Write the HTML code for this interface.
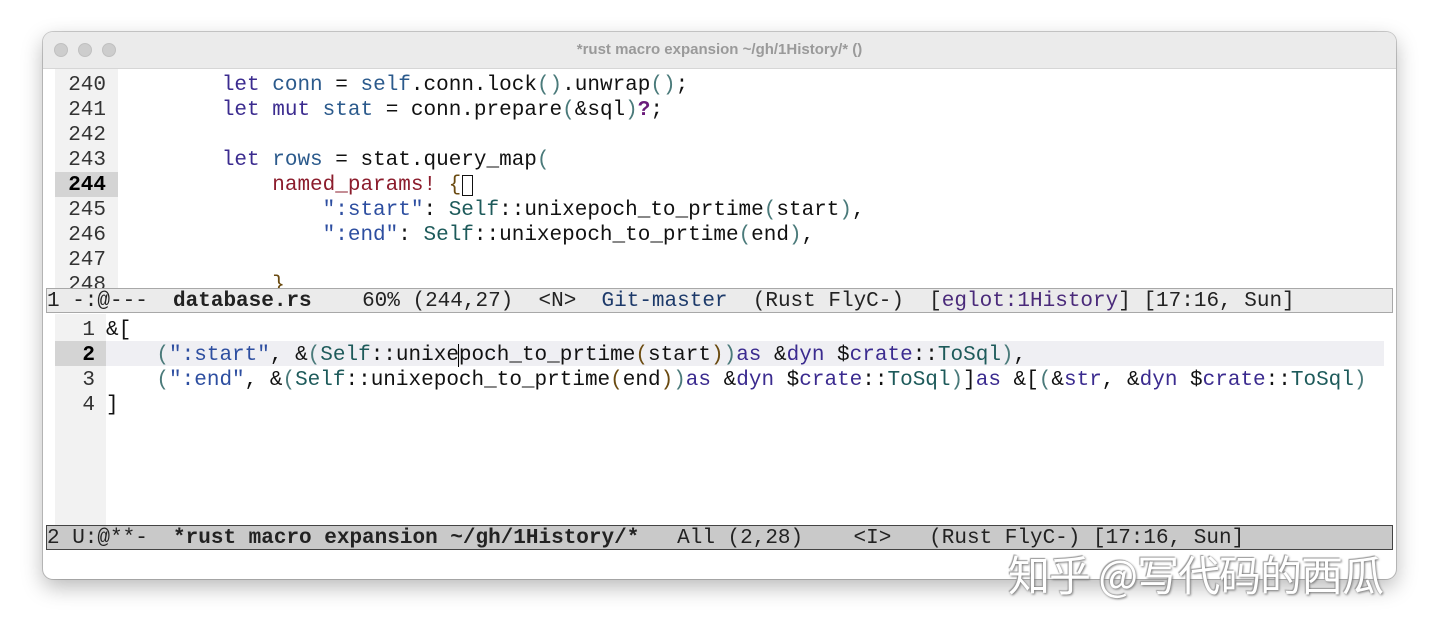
<!DOCTYPE html>
<html><head><meta charset="utf-8"><style>
body{margin:0;width:1440px;height:633px;background:#fff;position:relative;overflow:hidden;font-family:"Liberation Mono",monospace;}
.win{position:absolute;left:43px;top:32px;width:1353px;height:547px;border-radius:10px;background:#fff;box-shadow:0 8px 22px rgba(0,0,0,.28),0 0 0 1px #cfcfcf;overflow:hidden}
.title{position:absolute;left:0;top:0;width:100%;height:36px;background:#ebebeb;border-bottom:1px solid #d6d6d6;font-family:"Liberation Sans",sans-serif;font-weight:bold;font-size:15px;color:#9a9a9a;text-align:center;line-height:36px}
.dot{position:absolute;top:11px;width:14px;height:14px;border-radius:50%;background:#cdcdcd;border:1px solid #c0c0c0;box-sizing:border-box}
.l{position:absolute;font-size:21px;line-height:25px;white-space:pre;color:#111}
.g{position:absolute;background:#f2f2f2}
.n{position:absolute;font-size:21px;line-height:25px;text-align:right;color:#333;white-space:pre}
.k{color:#3b2b8f}.v{color:#2b5a8c}.s{color:#2d4ea0}.t{color:#1d5a5a}.m{color:#8b1c2c}.p{color:#4a7a7a}.q{color:#6a1a7a;font-weight:bold}.b{color:#6a4a10}
.ml{position:absolute;left:3px;width:1347px;height:25px;box-sizing:border-box;font-size:21px;line-height:25px;white-space:pre;color:#222}
</style></head><body>
<div class="win">
<div class="title">*rust macro expansion ~/gh/1History/* ()</div>
<div class="dot" style="left:11px"></div><div class="dot" style="left:35px"></div><div class="dot" style="left:59px"></div>

<div class="g" style="left:12px;top:37px;width:63px;height:219px"></div>
<div style="position:absolute;left:12px;top:140px;width:63px;height:25px;background:#d4d4d4"></div>
<div class="n" style="left:12px;top:41px;width:51px;height:215px;overflow:hidden">240
241
242
243
<b style="color:#000">244</b>
245
246
247
248</div>
<div class="l" style="left:78px;top:41px;height:215px;overflow:hidden">        <span class="k">let</span> <span class="v">conn</span> = <span class="v">self</span>.conn.lock<span class="p">()</span>.unwrap<span class="p">()</span>;
        <span class="k">let</span> <span class="k">mut</span> <span class="v">stat</span> = conn.prepare<span class="p">(</span>&amp;sql<span class="p">)</span><span class="q">?</span>;

        <span class="k">let</span> <span class="v">rows</span> = stat.query_map<span class="p">(</span>
            <span class="m">named_params!</span> <span class="b">{</span><span style="outline:1.5px solid #111;outline-offset:-2px">&nbsp;</span>
                <span class="s">":start"</span>: <span class="t">Self</span>::unixepoch_to_prtime<span class="p">(</span>start<span class="p">)</span>,
                <span class="s">":end"</span>: <span class="t">Self</span>::unixepoch_to_prtime<span class="p">(</span>end<span class="p">)</span>,

            <span class="b">}</span></div>

<div class="ml" style="top:256px;background:#ebebeb;border:1px solid #a8a8a8">1 -:@---  <b>database.rs</b>    60% (244,27)  &lt;N&gt;  <span style="color:#1d3a6a">Git-master</span>  (Rust FlyC-)  [<span style="color:#4a2a7a">eglot:1History</span>] [17:16, Sun]</div>

<div class="g" style="left:12px;top:282px;width:51px;height:211px"></div>
<div style="position:absolute;left:12px;top:309px;width:1329px;height:25px;background:#efeff3"></div>
<div style="position:absolute;left:12px;top:309px;width:51px;height:25px;background:#d4d4d4"></div>
<div class="n" style="left:12px;top:286px;width:40px">1
<b style="color:#000">2</b>
3
4</div>
<div class="l" style="left:63px;top:286px">&amp;[
    <span class="p">(</span><span class="s">":start"</span>, &amp;<span class="p">(</span><span class="t">Self</span>::unixe<span style="border-left:1px solid #000;margin-left:-1px">p</span>och_to_prtime<span class="b">(</span>start<span class="b">)</span><span class="p">)</span><span class="k">as</span> &amp;<span class="k">dyn</span> $<span class="k">crate</span>::<span class="t">ToSql</span><span class="p">)</span>,
    <span class="p">(</span><span class="s">":end"</span>, &amp;<span class="p">(</span><span class="t">Self</span>::unixepoch_to_prtime<span class="b">(</span>end<span class="b">)</span><span class="p">)</span><span class="k">as</span> &amp;<span class="k">dyn</span> $<span class="k">crate</span>::<span class="t">ToSql</span><span class="p">)</span>]<span class="k">as</span> &amp;[<span class="p">(</span>&amp;<span class="k">str</span>, &amp;<span class="k">dyn</span> $<span class="k">crate</span>::<span class="t">ToSql</span><span class="p">)</span>
]</div>

<div class="ml" style="top:493px;background:#c9c9c9;border:1px solid #444">2 U:@**-  <b>*rust macro expansion ~/gh/1History/*</b>   All (2,28)    &lt;I&gt;   (Rust FlyC-) [17:16, Sun]</div>
</div>
<div style="position:absolute;left:1008px;top:546px;font-family:'Noto Sans CJK SC',sans-serif;font-size:42px;line-height:56px;color:#fff;text-shadow:1px 1px 2px #777,-1px -1px 1px #999;letter-spacing:-1px">知乎 @写代码的西瓜</div>
</body></html>
